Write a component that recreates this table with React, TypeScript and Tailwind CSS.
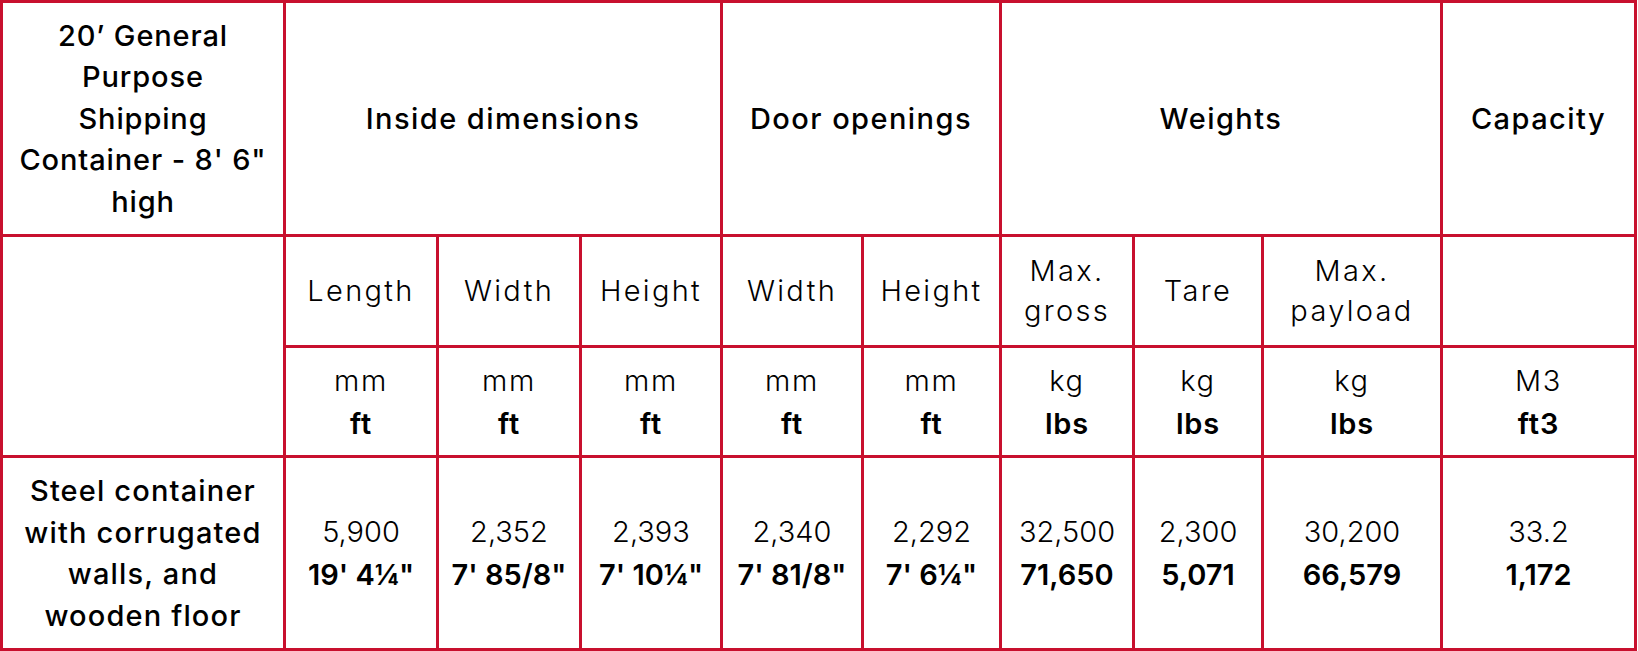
const border = "border-[3px] border-[#c8102e]";

type Unit = { top: string; bottom: string };

const units: Unit[] = [
  { top: "mm", bottom: "ft" },
  { top: "mm", bottom: "ft" },
  { top: "mm", bottom: "ft" },
  { top: "mm", bottom: "ft" },
  { top: "mm", bottom: "ft" },
  { top: "kg", bottom: "lbs" },
  { top: "kg", bottom: "lbs" },
  { top: "kg", bottom: "lbs" },
  { top: "M3", bottom: "ft3" },
];

const values: Unit[] = [
  { top: "5,900", bottom: "19' 4¼\"" },
  { top: "2,352", bottom: "7' 85/8\"" },
  { top: "2,393", bottom: "7' 10¼\"" },
  { top: "2,340", bottom: "7' 81/8\"" },
  { top: "2,292", bottom: "7' 6¼\"" },
  { top: "32,500", bottom: "71,650" },
  { top: "2,300", bottom: "5,071" },
  { top: "30,200", bottom: "66,579" },
  { top: "33.2", bottom: "1,172" },
];

function Pair({ item, spaced }: { item: Unit; spaced?: boolean }) {
  return (
    <td className={`${border} px-1 text-center align-middle leading-[43px]`}>
      <div className={spaced ? "font-light tracking-[0.06em]" : "font-light"}>{item.top}</div>
      <div className={spaced ? "font-semibold tracking-[0.03em]" : "font-semibold"}>{item.bottom}</div>
    </td>
  );
}

export default function App() {
  const base = `${border} text-center align-middle font-medium`;
  const head = `${base} tracking-[0.05em]`;
  const label = `${border} px-1 text-center align-middle font-light tracking-[0.08em]`;

  return (
    <div className="w-[1638px] h-[651px] bg-white">
      <table
        className="w-[1637px] table-fixed border-collapse text-[29px] text-black"
        style={{ fontFamily: "Inter, 'Noto Sans', sans-serif" }}
      >
        <colgroup>
          <col className="w-[283px]" />
          <col className="w-[153px]" />
          <col className="w-[143px]" />
          <col className="w-[141px]" />
          <col className="w-[141px]" />
          <col className="w-[138px]" />
          <col className="w-[133px]" />
          <col className="w-[129px]" />
          <col className="w-[179px]" />
          <col className="w-[194px]" />
        </colgroup>
        <tbody>
          <tr className="h-[234px]">
            <th className={`${base} px-1 leading-[41.5px] tracking-[0.03em] whitespace-nowrap`}>
              20’ General
              <br />
              Purpose
              <br />
              Shipping
              <br />
              Container - 8' 6"
              <br />
              high
            </th>
            <th className={head} colSpan={3}>
              Inside dimensions
            </th>
            <th className={head} colSpan={2}>
              Door openings
            </th>
            <th className={head} colSpan={3}>
              Weights
            </th>
            <th className={head}>Capacity</th>
          </tr>
          <tr className="h-[111px]">
            <td className={border} rowSpan={2} />
            {["Length", "Width", "Height", "Width", "Height"].map((text, index) => (
              <td key={index} className={label}>
                {text}
              </td>
            ))}
            <td className={`${label} leading-[40px]`}>
              Max.
              <br />
              gross
            </td>
            <td className={label}>Tare</td>
            <td className={`${label} leading-[40px]`}>
              Max.
              <br />
              payload
            </td>
            <td className={border} />
          </tr>
          <tr className="h-[110px]">
            {units.map((item, index) => (
              <Pair key={index} item={item} spaced />
            ))}
          </tr>
          <tr className="h-[193px]">
            <td className={`${base} px-3 leading-[41.5px] tracking-[0.04em]`}>
              Steel container with corrugated walls, and wooden floor
            </td>
            {values.map((item, index) => (
              <Pair key={index} item={item} />
            ))}
          </tr>
        </tbody>
      </table>
    </div>
  );
}
